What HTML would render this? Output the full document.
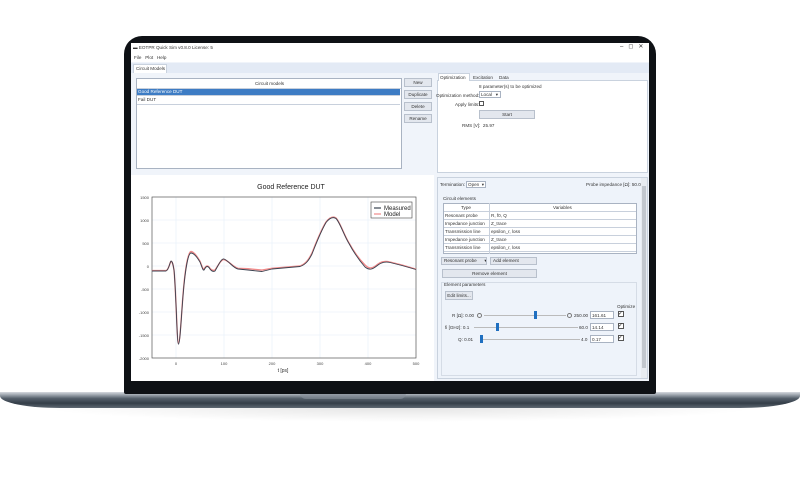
<!DOCTYPE html>
<html><head><meta charset="utf-8"><style>
*{margin:0;padding:0;box-sizing:border-box}
body{width:800px;height:497px;background:#fff;position:relative;overflow:hidden;font-family:"Liberation Sans",sans-serif;color:#222}
.a{position:absolute}
.t{position:absolute;font-size:4.6px;line-height:6px;white-space:nowrap;color:#333}
.btn{position:absolute;background:#e3e7ee;border:1px solid #b8c0cc;font-size:4.6px;line-height:7px;text-align:center;color:#333;white-space:nowrap;overflow:hidden}
.box{position:absolute;background:#fff;border:1px solid #a9b3c2}
</style></head><body>
<div class="a" style="left:0;top:392px;width:800px;height:16px;background:linear-gradient(#d5d9de 0,#a7aeb6 15%,#55606b 40%,#343e48 70%,#5e6872 100%);border-radius:0 0 60px 60px/0 0 12px 12px"></div>
<div class="a" style="left:300px;top:392px;width:106px;height:7px;background:linear-gradient(#a3aab3,#707a85);border-radius:0 0 6px 6px"></div>
<div class="a" style="left:40px;top:408px;width:720px;height:14px;background:radial-gradient(ellipse at center top,rgba(0,0,0,.1),rgba(0,0,0,0) 70%)"></div>
<div class="a" style="left:124px;top:36px;width:532px;height:358px;background:#0e1115;border-radius:18px 18px 2px 2px"></div>
<div class="a" style="left:131px;top:43px;width:518px;height:338px;background:#f0f4fa;overflow:hidden"></div>
<div class="a" style="left:131px;top:43px;width:518px;height:19px;background:#fff"></div>
<div class="t" style="left:133px;top:45px">▬ EOTPR Quick Sim v0.8.0 License: 5</div>
<div class="t" style="left:620px;top:44px;font-size:6px">–&nbsp;&nbsp; ◻&nbsp;&nbsp; ✕</div>
<div class="t" style="left:134px;top:55px">File&nbsp;&nbsp; Plot&nbsp;&nbsp; Help</div>
<div class="a" style="left:131px;top:63px;width:518px;height:10px;background:#e3eaf5"></div>
<div class="a" style="left:133px;top:64px;width:34px;height:9px;background:#fff;border:1px solid #c9d2de;border-bottom:none"></div>
<div class="t" style="left:136px;top:66px">Circuit Models</div>
<div class="box" style="left:136px;top:78px;width:266px;height:91px"></div>
<div class="t" style="left:255px;top:81px">Circuit models</div>
<div class="a" style="left:137px;top:88px;width:264px;height:1px;background:#c8d0dc"></div>
<div class="a" style="left:137px;top:89px;width:263px;height:6px;background:#3d7cc4"></div>
<div class="t" style="left:138px;top:89px;color:#fff">Good Reference DUT</div>
<div class="a" style="left:137px;top:95px;width:263px;height:1px;background:#c8d0dc"></div>
<div class="t" style="left:138px;top:97px">Fail DUT</div>
<div class="a" style="left:137px;top:104px;width:263px;height:1px;background:#c8d0dc"></div>
<div class="btn" style="left:404px;top:78px;width:28px;height:9px">New</div>
<div class="btn" style="left:404px;top:90px;width:28px;height:9px">Duplicate</div>
<div class="btn" style="left:404px;top:102px;width:28px;height:9px">Delete</div>
<div class="btn" style="left:404px;top:114px;width:28px;height:9px">Rename</div>
<div class="a" style="left:437px;top:80px;width:211px;height:93px;background:#fff;border:1px solid #c9d2de"></div>
<div class="a" style="left:438px;top:73px;width:32px;height:8px;background:#fff;border:1px solid #c9d2de;border-bottom:none"></div>
<div class="t" style="left:440px;top:75px">Optimization</div>
<div class="t" style="left:473px;top:75px">Excitation</div>
<div class="t" style="left:499px;top:75px">Data</div>
<div class="t" style="left:479px;top:84px">8 parameter(s) to be optimized</div>
<div class="t" style="left:436px;top:93px">Optimization method:</div>
<div class="box" style="left:479px;top:91px;width:22px;height:7px"></div>
<div class="t" style="left:481px;top:92px">Local&nbsp;&nbsp; ▾</div>
<div class="t" style="left:455px;top:102px">Apply limits:</div>
<div class="box" style="left:479px;top:101px;width:5px;height:5px;border-color:#555"></div>
<div class="btn" style="left:479px;top:110px;width:56px;height:9px">Start</div>
<div class="t" style="left:462px;top:123px">RMS [V]:&nbsp; 25.97</div>
<div class="a" style="left:131px;top:175px;width:303px;height:206px;background:#fff"></div>
<svg class="a" style="left:0;top:0" width="800" height="497" viewBox="0 0 800 497">
<g stroke="#e4eef8" stroke-width="0.6">
<line x1="176" y1="197" x2="176" y2="358"/><line x1="224" y1="197" x2="224" y2="358"/><line x1="272" y1="197" x2="272" y2="358"/><line x1="320" y1="197" x2="320" y2="358"/><line x1="368" y1="197" x2="368" y2="358"/>
<line x1="152" y1="220" x2="416" y2="220"/><line x1="152" y1="243" x2="416" y2="243"/><line x1="152" y1="266" x2="416" y2="266"/><line x1="152" y1="289" x2="416" y2="289"/><line x1="152" y1="312" x2="416" y2="312"/><line x1="152" y1="335" x2="416" y2="335"/>
</g>
<rect x="152" y="197" width="264" height="161" fill="none" stroke="#555" stroke-width="0.7"/>
<path fill="none" stroke="#f08a8a" stroke-width="1.4" stroke-linejoin="round" d="M152,270.6 L166,270.6 C169,270 170,261 171.2,261.4 C172.5,262 173,264 174,270 C176,290 177,343 178.4,343 C180,343 181,320 183,295 C185,270 188,252 191,251.5 C194,252 197,256 200,261.4 C202,266 203,270 204,269 C206,266 207,265 209,267 C211,270 213,271 215,270 C218,266 221,259 224,259.6 C229,261 233,267 238,268.3 L248,268.7 L262,270.1 L272,268.3 L300,266 C306,264 309,259 312,253 C316,243 320,232 326,222 C330,217 333,216 336,218 C340,222 344,235 349,243 C354,252 359,259 365,265 C370,270 373,268 378,264 C382,261 386,261 390,262 L402,265.1 L416,269.2"/>
<path fill="none" stroke="#3a4250" stroke-width="0.9" stroke-linejoin="round" d="M152,271 L166,271 C169,270 170,261 171.2,261 C172.5,261.5 173,264 174,270 C176,290 177,344.2 178.4,344.2 C180,344 181,321 183,296 C185,271 188,253 191,253 C194,253 197,257 200,262 C202,267 203,271 204,270 C206,266.5 207,265.5 209,267.5 C211,271 213,272 215,271 C218,266 221,258.5 224,259 C229,261 233,268 238,269 L248,270 L262,271.5 L272,269 L300,266.5 C306,264.5 309,260 312,254 C316,244 320,233 326,222.5 C330,217.5 333,216.5 336,218.5 C340,222.5 344,235.5 349,243.5 C354,253 359,260 365,267 C370,271 373,269 378,265 C382,262 386,261.5 390,262.5 L402,265.5 L416,269.5"/>
<rect x="371" y="202" width="41" height="16" fill="#fff" stroke="#444" stroke-width="0.6"/>
<line x1="374" y1="208" x2="381" y2="208" stroke="#3a4250" stroke-width="1.2"/>
<line x1="374" y1="214" x2="381" y2="214" stroke="#f08a8a" stroke-width="1.2"/>
<g font-family="Liberation Sans" font-size="6" fill="#222"><text x="384" y="210">Measured</text><text x="384" y="216">Model</text></g>
<text x="291" y="189" text-anchor="middle" font-family="Liberation Sans" font-size="7" fill="#222">Good Reference DUT</text>
<g font-family="Liberation Sans" font-size="4" fill="#444" text-anchor="end">
<text x="149" y="199">1500</text><text x="149" y="222">1000</text><text x="149" y="245">500</text><text x="149" y="268">0</text><text x="149" y="291">-500</text><text x="149" y="314">-1000</text><text x="149" y="337">-1500</text><text x="149" y="360">-2000</text></g>
<g font-family="Liberation Sans" font-size="4" fill="#444" text-anchor="middle">
<text x="176" y="365">0</text><text x="224" y="365">100</text><text x="272" y="365">200</text><text x="320" y="365">300</text><text x="368" y="365">400</text><text x="416" y="365">500</text></g>
<text x="283" y="372" text-anchor="middle" font-family="Liberation Sans" font-size="5" fill="#333">t [ps]</text>
</svg>
<div class="a" style="left:437px;top:177px;width:211px;height:202px;background:#eef3fa;border:1px solid #c9d2de"></div>
<div class="a" style="left:641px;top:178px;width:6px;height:200px;background:#e8ecf1"></div>
<div class="a" style="left:642px;top:186px;width:4px;height:182px;background:#c2c7ce"></div>
<div class="t" style="left:440px;top:182px">Termination:</div>
<div class="box" style="left:466px;top:181px;width:20px;height:7px"></div>
<div class="t" style="left:468px;top:182px">Open&nbsp; ▾</div>
<div class="t" style="left:586px;top:182px">Probe impedance [Ω]: 50.0</div>
<div class="t" style="left:443px;top:196px">Circuit elements</div>
<div class="box" style="left:443px;top:203px;width:194px;height:51px"></div>
<div class="a" style="left:489px;top:203px;width:1px;height:51px;background:#c8d0dc"></div>
<div class="t" style="left:461px;top:205px">Type</div><div class="t" style="left:553px;top:205px">Variables</div>
<div class="a" style="left:444px;top:211px;width:192px;height:1px;background:#c8d0dc"></div>
<div class="t" style="left:445px;top:213px">Resonant probe</div><div class="t" style="left:491px;top:213px">R, f0, Q</div>
<div class="a" style="left:444px;top:219px;width:192px;height:1px;background:#c8d0dc"></div>
<div class="t" style="left:445px;top:221px">Impedance junction</div><div class="t" style="left:491px;top:221px">Z_trace</div>
<div class="a" style="left:444px;top:227px;width:192px;height:1px;background:#c8d0dc"></div>
<div class="t" style="left:445px;top:229px">Transmission line</div><div class="t" style="left:491px;top:229px">epsilon_r, loss</div>
<div class="a" style="left:444px;top:235px;width:192px;height:1px;background:#c8d0dc"></div>
<div class="t" style="left:445px;top:237px">Impedance junction</div><div class="t" style="left:491px;top:237px">Z_trace</div>
<div class="a" style="left:444px;top:243px;width:192px;height:1px;background:#c8d0dc"></div>
<div class="t" style="left:445px;top:245px">Transmission line</div><div class="t" style="left:491px;top:245px">epsilon_r, loss</div>
<div class="a" style="left:444px;top:251px;width:192px;height:1px;background:#c8d0dc"></div>
<div class="btn" style="left:441px;top:257px;width:46px;height:8px;text-align:left;padding-left:2px;line-height:6px">Resonant probe&nbsp;&nbsp;&nbsp;&nbsp;&nbsp; ▾</div>
<div class="btn" style="left:490px;top:257px;width:47px;height:8px;text-align:left;padding-left:2px;line-height:6px">Add element</div>
<div class="btn" style="left:442px;top:269px;width:95px;height:9px">Remove element</div>
<div class="a" style="left:441px;top:282px;width:196px;height:94px;border:1px solid #d5dce6"></div>
<div class="t" style="left:444px;top:282px">Element parameters</div>
<div class="btn" style="left:445px;top:291px;width:28px;height:9px">Edit limits...</div>
<div class="t" style="left:617px;top:304px">Optimize</div>
<div class="t" style="left:452px;top:313px">R [Ω]: 0.00</div>
<div class="a" style="left:477px;top:313px;width:5px;height:5px;border:1px solid #777;border-radius:50%"></div>
<div class="a" style="left:484px;top:315px;width:82px;height:1px;background:#bbb"></div>
<div class="a" style="left:534px;top:311px;width:3px;height:8px;background:#1f6fc0"></div>
<div class="a" style="left:567px;top:313px;width:5px;height:5px;border:1px solid #777;border-radius:50%"></div>
<div class="t" style="left:574px;top:313px">250.00</div>
<div class="box" style="left:590px;top:311px;width:24px;height:8px"></div><div class="t" style="left:592px;top:313px">161.61</div>
<div class="box" style="left:618px;top:311px;width:6px;height:6px;border-color:#555"></div><div class="t" style="left:618px;top:311px;font-size:6px">✓</div>
<div class="t" style="left:445px;top:325px">fi [GHz]: 0.1</div>
<div class="a" style="left:474px;top:327px;width:104px;height:1px;background:#bbb"></div>
<div class="a" style="left:496px;top:323px;width:3px;height:8px;background:#1f6fc0"></div>
<div class="t" style="left:579px;top:325px">60.0</div>
<div class="box" style="left:590px;top:323px;width:24px;height:8px"></div><div class="t" style="left:592px;top:325px">14.14</div>
<div class="box" style="left:618px;top:323px;width:6px;height:6px;border-color:#555"></div><div class="t" style="left:618px;top:323px;font-size:6px">✓</div>
<div class="t" style="left:458px;top:337px">Q: 0.01</div>
<div class="a" style="left:480px;top:339px;width:100px;height:1px;background:#bbb"></div>
<div class="a" style="left:480px;top:335px;width:3px;height:8px;background:#1f6fc0"></div>
<div class="t" style="left:581px;top:337px">4.0</div>
<div class="box" style="left:590px;top:335px;width:24px;height:8px"></div><div class="t" style="left:592px;top:337px">0.17</div>
<div class="box" style="left:618px;top:335px;width:6px;height:6px;border-color:#555"></div><div class="t" style="left:618px;top:335px;font-size:6px">✓</div>
</body></html>
